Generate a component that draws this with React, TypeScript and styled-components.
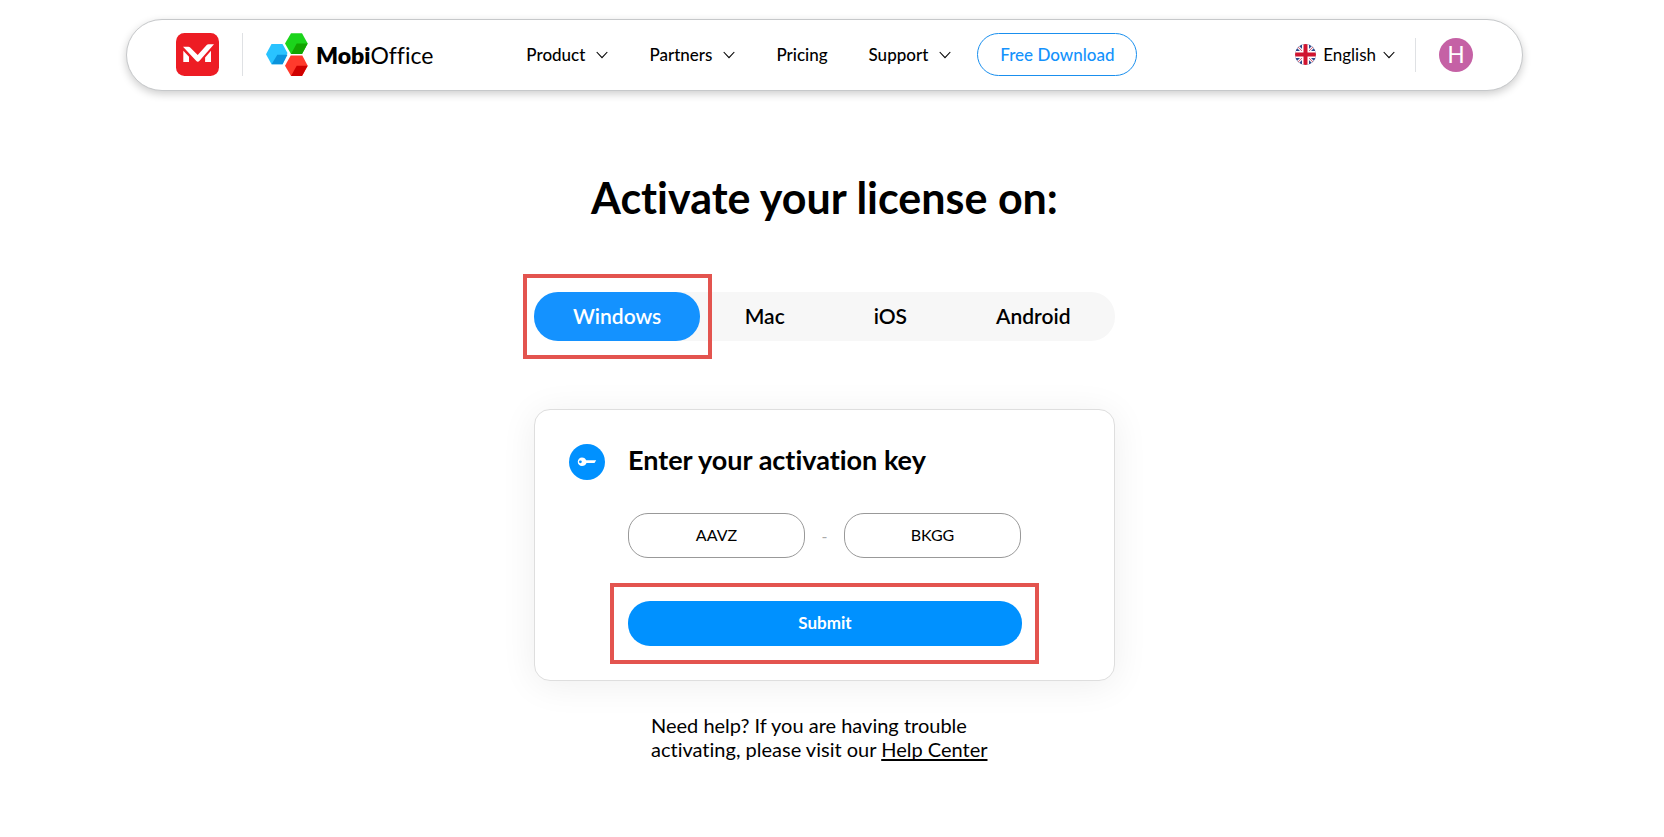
import React, { useState } from 'react';
import styled, { createGlobalStyle, css } from 'styled-components';

const GlobalStyle = createGlobalStyle`
  *, *::before, *::after { box-sizing: border-box; }
  body {
    margin: 0;
    background: #fff;
    color: #000;
    font-family: Lato, "Liberation Sans", sans-serif;
    font-variant-ligatures: none;
  }
  button, input { font: inherit; color: inherit; }
`;

const Page = styled.div`
  padding: 19px 15px 48px 0;
`;

const Header = styled.header`
  display: flex;
  align-items: center;
  height: 72px;
  margin: 0 126px;
  padding: 0 49px 1px;
  border: 1px solid #c6c8ca;
  border-radius: 36px;
  background: #fff;
  box-shadow: 0 3px 8px rgba(0, 0, 0, 0.2);
`;

const Brand = styled.div`
  display: flex;
  align-items: center;
`;

const BrandLink = styled.a`
  display: flex;
  align-items: center;
  gap: 8px;
  color: #000;
  text-decoration: none;
`;

const Divider = styled.span<{ $height: number; $left: number }>`
  flex: none;
  width: 1px;
  height: ${(p) => p.$height}px;
  margin: 0 23px 0 ${(p) => p.$left}px;
  background: #dfe1e4;
`;

const Wordmark = styled.span`
  font-size: 23px;
  line-height: 28px;
  b { font-weight: 800; }
`;

const Nav = styled.nav`
  display: flex;
  align-items: center;
  gap: 41px;
  margin-left: 93px;
`;

const NavGroup = styled.div`
  display: flex;
  align-items: center;
  gap: 26px;
`;

const navText = css`
  font-size: 17px;
  line-height: 24px;
  font-weight: 500;
  white-space: nowrap;
  text-decoration: none;
`;

const NavButton = styled.button`
  ${navText}
  display: flex;
  align-items: center;
  gap: 11px;
  padding: 0;
  border: 0;
  background: none;
  cursor: pointer;
`;

const NavLink = styled.a`
  ${navText}
  color: #000;
`;

const DownloadLink = styled.a`
  ${navText}
  display: flex;
  align-items: center;
  height: 43px;
  padding: 0 22px;
  border: 1px solid #1a8fee;
  border-radius: 22px;
  color: #1492fc;
`;

const Account = styled.div`
  display: flex;
  align-items: center;
  margin-left: auto;
`;

const LanguageButton = styled(NavButton)`
  gap: 7px;
  font-weight: 400;
`;

const Avatar = styled.button`
  width: 34px;
  height: 34px;
  padding: 0;
  border: 0;
  border-radius: 50%;
  background: #c561a5;
  color: #fff;
  font-family: Roboto, sans-serif;
  font-size: 24px;
  line-height: 34px;
  cursor: pointer;
`;

const Main = styled.main`
  display: flex;
  flex-direction: column;
  align-items: center;
  padding-top: 81px;
`;

const Title = styled.h1`
  margin: 0 0 68px;
  font-size: 43px;
  line-height: 52px;
  font-weight: 700;
`;

const Tabs = styled.div`
  display: flex;
  width: 100%;
  max-width: 581px;
  height: 49px;
  margin-bottom: 68px;
  border-radius: 24px;
  background: #f7f7f7;
`;

const Tab = styled.button<{ $active: boolean }>`
  position: relative;
  flex: ${(p) => (p.$active ? '0 0 auto' : '1 1 auto')};
  padding: 0 39px 2px;
  border: 0;
  border-radius: 24px;
  background: ${(p) => (p.$active ? '#1492ff' : 'transparent')};
  color: ${(p) => (p.$active ? '#fff' : '#000')};
  font-size: 21px;
  line-height: 26px;
  font-weight: 600;
  cursor: pointer;
`;

const Marker = styled.span<{ $inset: string }>`
  position: absolute;
  inset: ${(p) => p.$inset};
  border: 4px solid #e3544f;
  pointer-events: none;
`;

const Card = styled.form`
  display: grid;
  grid-template-columns: 36px 394px;
  column-gap: 23px;
  width: 100%;
  max-width: 581px;
  padding: 34px;
  border: 1px solid #dedede;
  border-radius: 16px;
  background: #fff;
  box-shadow: 0 4px 36px rgba(0, 0, 0, 0.07);
`;

const KeyBadge = styled.span`
  display: flex;
  align-items: center;
  justify-content: center;
  width: 36px;
  height: 36px;
  border-radius: 50%;
  background: #0091ff;
`;

const CardTitle = styled.h2`
  margin: 0;
  font-size: 27px;
  line-height: 32px;
  font-weight: 700;
`;

const KeyFields = styled.div`
  grid-column: 2;
  display: flex;
  align-items: center;
  margin: 33px 0 43px;
`;

const Dash = styled.span`
  width: 39px;
  color: #aaa;
  text-align: center;
`;

const KeyInput = styled.input`
  width: 177px;
  height: 45px;
  padding: 0 12px 2px;
  border: 1px solid #999;
  border-radius: 20px;
  background: #fff;
  color: #000;
  font-size: 16px;
  text-align: center;
`;

const SubmitButton = styled.button`
  position: relative;
  grid-column: 2;
  height: 45px;
  padding: 0 0 2px;
  border: 0;
  border-radius: 22px;
  background: #0091ff;
  color: #fff;
  font-size: 17px;
  line-height: 24px;
  font-weight: 700;
  cursor: pointer;
`;

const Help = styled.p`
  width: 347px;
  margin: 32px 0 0;
  font-size: 20px;
  line-height: 24px;
`;

const HelpLink = styled.a`
  display: inline-block;
  color: #000;
  text-decoration-thickness: 2px;
  text-underline-offset: 2px;
  text-decoration-skip-ink: none;
`;

const Chevron = () => (
  <svg width="12" height="8" viewBox="0 0 12 8" fill="none" stroke="#000" strokeWidth="1.1" aria-hidden="true">
    <path d="M0.7 1l5.3 5.7L11.3 1" />
  </svg>
);

const CompanyLogo = () => (
  <svg width="43" height="43" viewBox="0 0 43 43" role="img" aria-label="MobiSystems">
    <rect width="43" height="43" rx="8.5" fill="#ed1c24" />
    <g fill="#fff">
      <path d="M7 13.7h5.5q.8 0 1.4.6l7.8 7.7 9-9.9q.7-.8 1.8-.8H38L23.5 27.8q-1.7 1.7-3.4 0z" />
      <path d="M7.3 17.7l5.7 6V29H7.3zM35 17.7V29h-5.9v-4.6z" />
    </g>
  </svg>
);

const ProductLogo = () => (
  <svg width="42" height="43" viewBox="0 0 42 43" aria-hidden="true">
    <path fill="#29c3ff" d="M0 21.3L5.5 11h11l5 9.1-5 11.2h-11z" />
    <path fill="#0a93dc" d="M11.3 21.7h10.2l-4.9 9.6H5.6z" />
    <path fill="#1bd41b" d="M19 10.5L25 .2h11l5.7 10.3L36 21H25z" />
    <path fill="#12a400" d="M30.7 10.5h11L36 21H25z" />
    <path fill="#ff3a2c" d="M19 32.7l5.7-10.2h11.6l5.4 10.2L36 43H25z" />
    <path fill="#d00000" d="M30.7 32.7h11L36 43H25z" />
  </svg>
);

const FlagIcon = () => (
  <svg width="21" height="21" viewBox="0 0 21 21" aria-hidden="true">
    <defs>
      <clipPath id="flag-disc"><circle cx="10.5" cy="10.5" r="10.5" /></clipPath>
    </defs>
    <g clipPath="url(#flag-disc)">
      <path fill="#2c4a8c" d="M0 0h21v21H0z" />
      <path stroke="#f4f4f8" strokeWidth="3" d="M0 0l21 21M21 0L0 21" />
      <path stroke="#d8667c" strokeWidth="1" d="M0 0l21 21M21 0L0 21" />
      <path stroke="#fff" strokeWidth="7" d="M10.5 0v21M0 10.5h21" />
      <path stroke="#d0142f" strokeWidth="4" d="M10.5 0v21M0 10.5h21" />
    </g>
  </svg>
);

const KeyIcon = () => (
  <svg width="20" height="10" viewBox="0 0 20 10" aria-hidden="true">
    <path
      fill="#fff"
      fillRule="evenodd"
      d="M5 .5C7.2 .5 8.6 1.8 9.200 3.300H19.200L17.500 6H9.500C8.800 8 7.300 9 5 9A4.250 4.250 0 1 1 5 .5zM3.400 3.400a1.400 1.400 0 1 0 .01 2.800a1.400 1.400 0 1 0-.01-2.800z"
    />
  </svg>
);

const PLATFORMS = ['Windows', 'Mac', 'iOS', 'Android'];

export default function App() {
  const [platform, setPlatform] = useState('Windows');
  const [first, setFirst] = useState('AAVZ');
  const [second, setSecond] = useState('BKGG');

  return (
    <>
      <GlobalStyle />
      <Page>
        <Header>
          <Brand>
            <BrandLink href="#home"><CompanyLogo /></BrandLink>
            <Divider $height={43} $left={23} />
            <BrandLink href="#office">
              <ProductLogo />
              <Wordmark><b>Mobi</b>Office</Wordmark>
            </BrandLink>
          </Brand>
          <Nav>
            <NavButton type="button">Product<Chevron /></NavButton>
            <NavButton type="button">Partners<Chevron /></NavButton>
            <NavLink href="#pricing">Pricing</NavLink>
            <NavGroup>
              <NavButton type="button">Support<Chevron /></NavButton>
              <DownloadLink href="#download">Free Download</DownloadLink>
            </NavGroup>
          </Nav>
          <Account>
            <LanguageButton type="button"><FlagIcon />English<Chevron /></LanguageButton>
            <Divider $height={34} $left={20} />
            <Avatar type="button" aria-label="Account">H</Avatar>
          </Account>
        </Header>

        <Main>
          <Title>Activate your license on:</Title>
          <Tabs role="tablist">
            {PLATFORMS.map((name) => (
              <Tab
                key={name}
                type="button"
                role="tab"
                aria-selected={platform === name}
                $active={platform === name}
                onClick={() => setPlatform(name)}
              >
                {name}
                {platform === name && <Marker $inset="-18px -12px -18px -11px" />}
              </Tab>
            ))}
          </Tabs>

          <Card onSubmit={(e) => e.preventDefault()}>
            <KeyBadge><KeyIcon /></KeyBadge>
            <CardTitle>Enter your activation key</CardTitle>
            <KeyFields>
              <KeyInput
                aria-label="Activation key, first part"
                value={first}
                maxLength={4}
                onChange={(e) => setFirst(e.target.value)}
              />
              <Dash>-</Dash>
              <KeyInput
                aria-label="Activation key, second part"
                value={second}
                maxLength={4}
                onChange={(e) => setSecond(e.target.value)}
              />
            </KeyFields>
            <SubmitButton type="submit">
              Submit
              <Marker $inset="-18px -17px -18px -18px" />
            </SubmitButton>
          </Card>

          <Help>
            Need help? If you are having trouble activating, please visit our <HelpLink href="#help">Help Center</HelpLink>
          </Help>
        </Main>
      </Page>
    </>
  );
}
